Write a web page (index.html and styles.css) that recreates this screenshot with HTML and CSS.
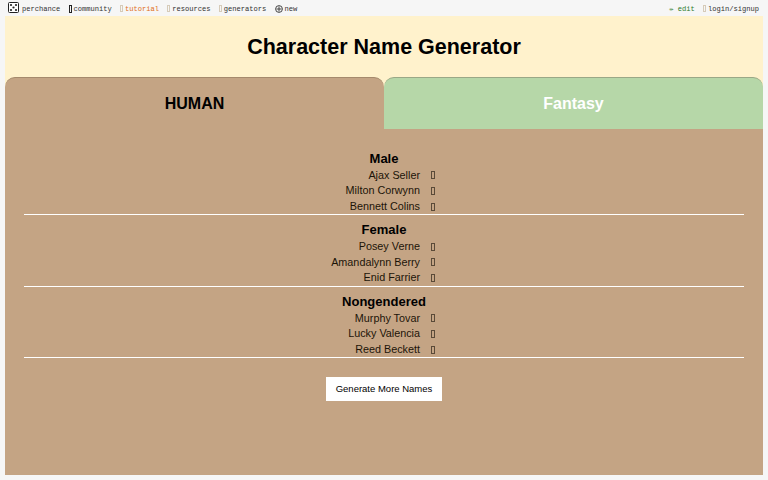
FILE: index.html
```html
<!DOCTYPE html>
<html lang="en">
<head><meta charset="UTF-8"/><meta name="viewport" content="width=device-width, initial-scale=1.0"/>
<title>Character Name Generator</title>
<link rel="stylesheet" href="styles.css">
</head><body>
<div class="topbar">
 <div class="links">
  <a class="logo"><svg width="11" height="11" viewBox="0 0 11 11"><rect x="0.5" y="0.5" width="10" height="10" rx="1" fill="#fff" stroke="#222"/><circle cx="3" cy="3" r="1.1" fill="#222"/><circle cx="8" cy="3" r="1.1" fill="#222"/><circle cx="5.5" cy="5.5" r="1.1" fill="#222"/><circle cx="3" cy="8" r="1.1" fill="#222"/><circle cx="8" cy="8" r="1.1" fill="#222"/></svg>perchance</a>
  <a><span class="tofu dark"></span>community</a>
  <a class="orange"><span class="tofu"></span>tutorial</a>
  <a><span class="tofu"></span>resources</a>
  <a><span class="tofu"></span>generators</a>
  <a><svg class="plus" width="8" height="8" viewBox="0 0 8 8"><circle cx="4" cy="4" r="3.4" fill="none" stroke="#333" stroke-width="0.9"/><path d="M4 1.5V6.5M1.5 4H6.5" stroke="#333" stroke-width="0.9"/></svg>new</a>
 </div>
 <div class="links">
  <a class="green">✏ edit</a>
  <a><span class="tofu"></span>login/signup</a>
 </div>
</div>
<div class="page">
 <h1>Character Name Generator</h1>
 <div class="tabs">
  <div class="tab active">HUMAN</div>
  <div class="tab">Fantasy</div>
 </div>
 <div class="panel">
  <div class="group">
   <h3>Male</h3>
   <div class="name"><span>Ajax Seller</span><span class="copy"></span></div>
   <div class="name"><span>Milton Corwynn</span><span class="copy"></span></div>
   <div class="name"><span>Bennett Colins</span><span class="copy"></span></div>
  </div>
  <div class="group">
   <h3>Female</h3>
   <div class="name"><span>Posey Verne</span><span class="copy"></span></div>
   <div class="name"><span>Amandalynn Berry</span><span class="copy"></span></div>
   <div class="name"><span>Enid Farrier</span><span class="copy"></span></div>
  </div>
  <div class="group">
   <h3>Nongendered</h3>
   <div class="name"><span>Murphy Tovar</span><span class="copy"></span></div>
   <div class="name"><span>Lucky Valencia</span><span class="copy"></span></div>
   <div class="name"><span>Reed Beckett</span><span class="copy"></span></div>
  </div>
  <button class="more">Generate More Names</button>
 </div>
</div>
</body></html>
```
FILE: styles.css
```css
body{margin:0;background:#f6f6f6;font-family:"Liberation Sans",sans-serif;color:#000;height:480px;overflow:hidden;}
.topbar{display:flex;justify-content:space-between;box-sizing:border-box;height:16px;padding:1px 9px 0 8px;font-family:"Liberation Mono",monospace;font-size:7.1px;color:#333;}
.links{display:flex;align-items:center;gap:8.2px;}
.links a{display:flex;align-items:center;}
.logo svg{margin:-2px 3px 0 0;}
.plus{margin-right:2px;}
.orange{color:#e0701a;}
.green{color:#2a7a2a;}
.tofu{display:inline-block;width:1px;height:5px;margin-right:2px;border:1px solid #c9b9a0;opacity:.7;}
.tofu.dark{height:6px;border-color:#222;opacity:1;}
.page{margin:0 5px;width:758px;height:459px;background:#fff2cc;display:flex;flex-direction:column;}
h1{margin:0;height:61px;line-height:63px;text-align:center;font-size:21.5px;}
.tabs{display:flex;height:52px;}
.tab{flex:1;background:#b6d7a8;color:#fff;font-weight:bold;font-size:16px;display:flex;align-items:center;justify-content:center;border-radius:10px 10px 0 0;border-top:1px solid #9aa886;}
.tab.active{background:#c4a484;color:#000;border-top-color:#a58a6c;}
.panel{flex:1;background:#c4a484;padding:20.6px 19px 0;display:flex;flex-direction:column;align-items:stretch;}
.group{border-bottom:1px solid #fff;margin-bottom:5.7px;text-align:center;}
h3{margin:0;font-size:13px;line-height:18px;}
.name{display:grid;grid-template-columns:396px auto;column-gap:11px;text-align:right;font-size:10.8px;line-height:15.6px;color:#1c1408;}
.copy{justify-self:start;align-self:center;width:2px;height:6px;border:1px solid #5a4a38;}
.more{align-self:center;margin-top:12.9px;width:116px;height:24px;border:none;background:#fff;font-family:"Liberation Sans",sans-serif;font-size:9.5px;color:#000;padding:0;}
```
